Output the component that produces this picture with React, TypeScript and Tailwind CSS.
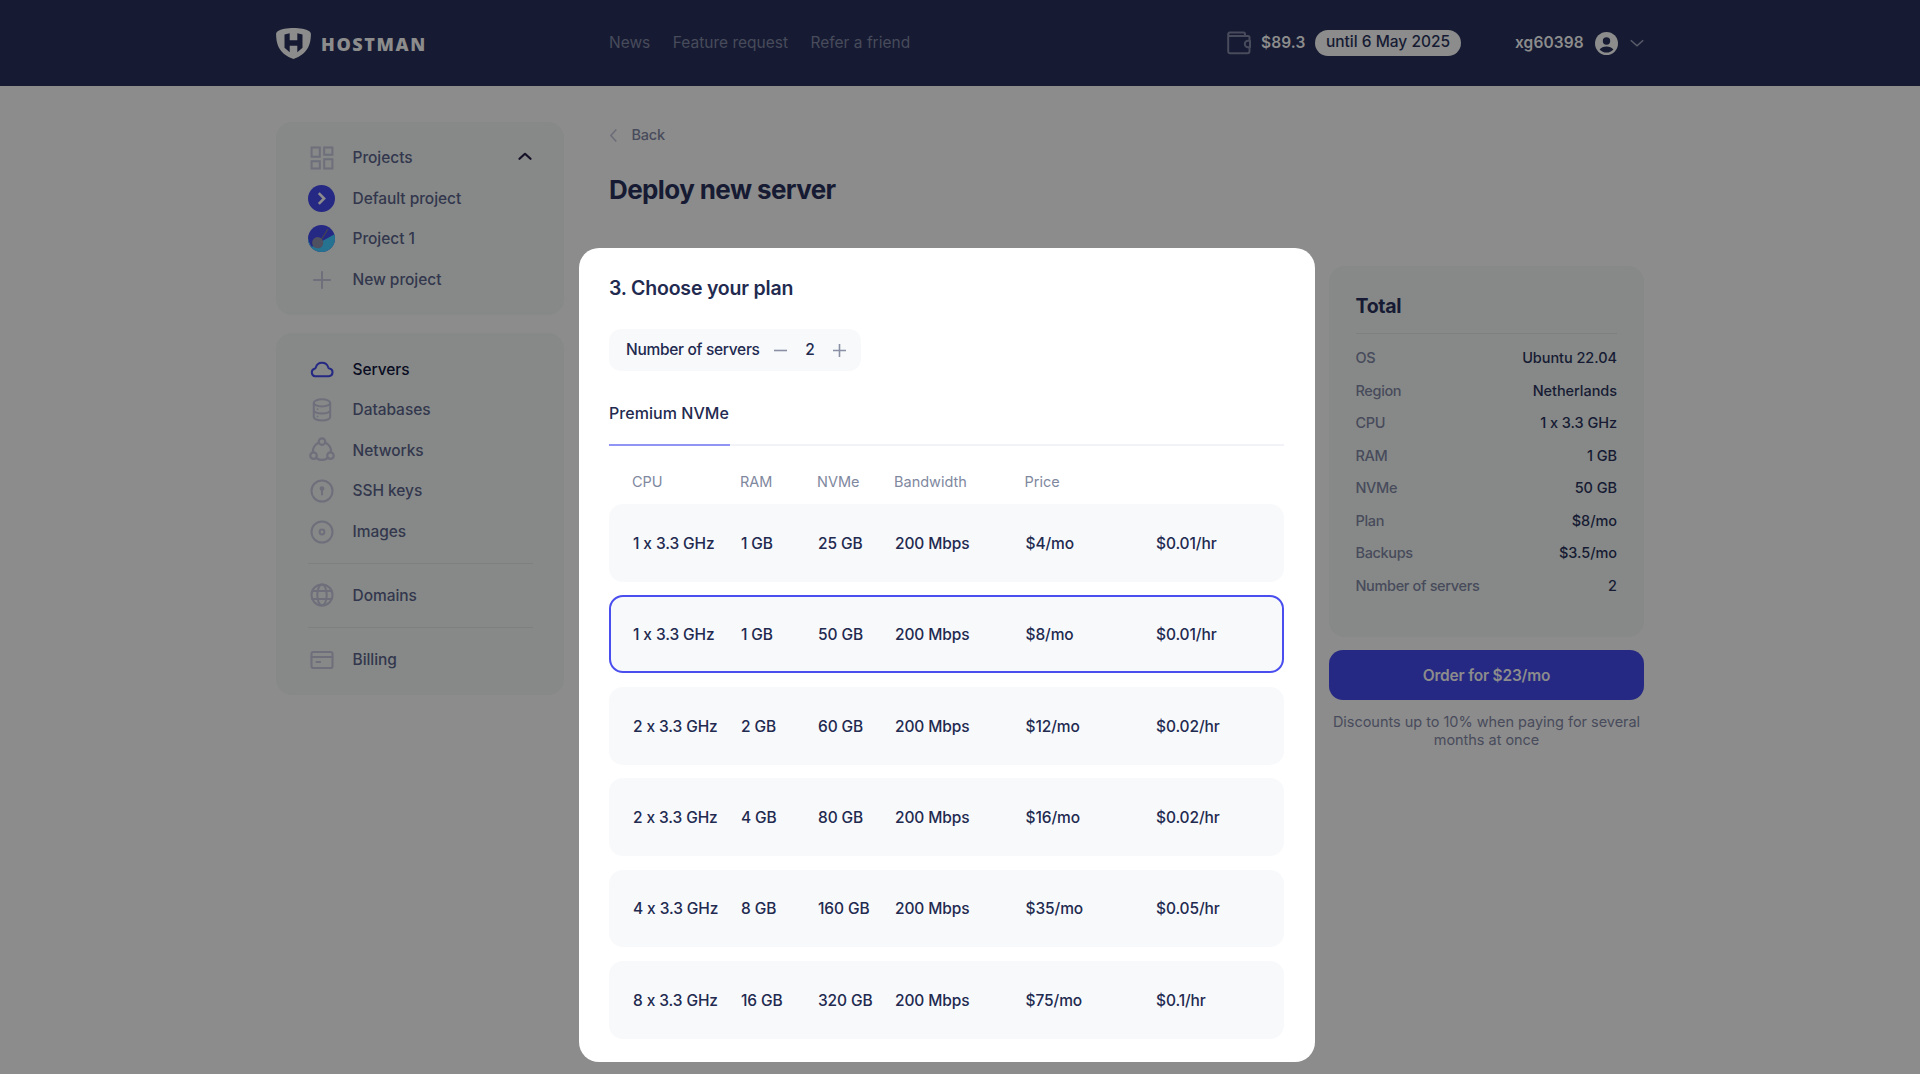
import type { ReactNode } from 'react';

function Icon({ size = 24, className = '', children }: { size?: number; className?: string; children: ReactNode }) {
  return (
    <svg width={size} height={size} viewBox="0 0 24 24" fill="none" stroke="currentColor" strokeWidth="2" strokeLinecap="round" strokeLinejoin="round" className={`shrink-0 ${className}`}>
      {children}
    </svg>
  );
}

const icons = {
  projects: (
    <Icon>
      <path strokeLinejoin="miter" d="M1.6 1.5h8.2v9.2H1.6zM14.2 1.5h8.2v7.2h-8.2zM1.6 15.3h8.2v7.2H1.6zM14.2 13.3h8.2v9.2h-8.2z" />
    </Icon>
  ),
  defaultProject: (
    <svg width="27" height="27" viewBox="0 0 27 27" fill="none">
      <circle cx="13.5" cy="13.5" r="13.5" fill="#262984" />
      <path d="m10.8 8.2 5.3 5.3-5.3 5.3" stroke="#8c8c8c" strokeWidth="2.6" />
    </svg>
  ),
  project1: (
    <svg width="27" height="27" viewBox="0 0 27 27" fill="none">
      <defs>
        <clipPath id="avatar">
          <circle cx="13.5" cy="13.5" r="13.5" />
        </clipPath>
      </defs>
      <g clipPath="url(#avatar)">
        <path d="M0 0h27v27H0z" fill="#262984" />
        <path d="M28 8.5 0 24v4h28z" fill="#267391" />
        <path d="M0 13c1 5 3 9 7 12l-5 2-2-5z" fill="#267391" />
        <path d="M13 15 20 4" stroke="#45464f" strokeWidth="1.2" />
        <circle cx="9.7" cy="17.7" r="5.6" fill="#4f5060" />
      </g>
    </svg>
  ),
  plus: (
    <Icon>
      <path strokeLinecap="butt" d="M12 3.2v17.6M3.2 12h17.6" />
    </Icon>
  ),
  cloud: (
    <Icon className="text-[#262984]">
      <path d="M5.2 19.2h13.6a3.9 3.9 0 0 0 .7-7.7 2 2 0 0 1-1.3-1.2 6.5 6.5 0 0 0-12.4.2 2 2 0 0 1-1.3 1.3A3.8 3.8 0 0 0 5.2 19.2z" />
    </Icon>
  ),
  database: (
    <Icon>
      <ellipse cx="12" cy="4.9" rx="8.2" ry="3.6" />
      <path d="M3.8 5v14c0 2 3.7 3.5 8.200 3.500s8.200-1.500 8.200-3.500V5M3.800 12.200c0 1.900 3.700 3.400 8.200 3.400s8.200-1.500 8.200-3.400" />
      <path strokeWidth="1.700" d="M7.500 11.200v.01M7.500 18.300v.01" />
    </Icon>
  ),
  network: (
    <Icon size={26}>
      <circle cx="12" cy="4.2" r="3" />
      <circle cx="4.2" cy="17.2" r="3" />
      <circle cx="19.8" cy="17.2" r="3" />
      <path d="M9.2 5.2a8.7 8.7 0 0 0-5.6 8.7M14.8 5.2a8.7 8.7 0 0 1 5.6 8.7M7 19.6a9.3 9.3 0 0 0 10 0" />
    </Icon>
  ),
  key: (
    <Icon>
      <circle cx="12" cy="12" r="10.5" />
      <circle cx="12" cy="9.6" r="1.4" fill="currentColor" />
      <path d="M12 10v5.5" />
    </Icon>
  ),
  disc: (
    <Icon>
      <circle cx="12" cy="12" r="10.5" />
      <circle cx="12" cy="12" r="2.4" />
    </Icon>
  ),
  globe: (
    <Icon>
      <circle cx="12" cy="12" r="10.5" />
      <ellipse cx="12" cy="12" rx="4.7" ry="10.5" />
      <path d="M2.3 8h19.4M2.3 16h19.4" />
    </Icon>
  ),
  card: (
    <Icon>
      <rect x="1.5" y="4" width="21" height="16" rx="1.8" />
      <path d="M1.5 9h21M6.5 14h3.6" />
    </Icon>
  ),
};

function NavItem({ icon, label, active, chevron }: { icon: ReactNode; label: string; active?: boolean; chevron?: boolean }) {
  return (
    <li className="flex h-[40.6px] items-center">
      <span className="flex w-[27px] justify-center text-[#6e6f7b]">{icon}</span>
      <span className={`ml-[17.5px] flex-1 text-[15.5px] font-medium tracking-[-0.05px] ${active ? 'text-[#0a0c22]' : 'text-[#33374d]'}`}>{label}</span>
      {chevron && (
        <svg width="14" height="9" viewBox="0 0 14 9" fill="none" stroke="#150f28" strokeWidth="2.2" strokeLinecap="round" strokeLinejoin="round" className="mb-[2px]">
          <path d="m1.5 6.8 5.5-5 5.5 5" />
        </svg>
      )}
    </li>
  );
}

function Header() {
  return (
    <header className="flex h-[86px] items-center bg-[#161b33] px-[276px] text-[#8c8c8c]">
      <div className="flex w-[333px] items-center">
        <svg width="35" height="31" viewBox="0 0 35 31" fill="none">
          <path d="M17.5 0C11 0 5 1 1.7 3.2.5 4 0 5 .1 6.5.3 17 3.5 26 17.5 31 31.5 26 34.7 17 34.9 6.5 35 5 34.5 4 33.3 3.2 30 1 24 0 17.5 0z" fill="#8c8c8c" />
          <path d="M8.5 6.5 13.700 5.300v7h7.600v-7l5.200 1.200v13.300l-5.200 4.400v-6.400h-7.600v6.400l-5.200-4.400z" fill="#161b33" />
        </svg>
        <span className="ml-[10px] mt-[2px] font-['Open_Sans'] text-[18px] font-extrabold leading-5 tracking-[1.6px]">HOSTMAN</span>
      </div>
      <nav className="flex flex-1 gap-[22.500px] text-[15.5px] text-[#484b5b]">
        <a>News</a>
        <a>Feature request</a>
        <a>Refer a friend</a>
      </nav>
      <div className="flex items-center">
        <Icon className="text-[#484b5b]">
          <path d="M22.5 9.5V6.5a1.5 1.5 0 0 0-1.5-1.5H2.5a1.4 1.4 0 0 1-1.3-1.4v0A2 2 0 0 1 3 1.5h13.500a1.500 1.500 0 0 1 1.500 1.500v2M1.200 3.500v16.800a2 2 0 0 0 2 2H20.500a2 2 0 0 0 2-2v-4M23 9.800h-2a3.200 3.200 0 0 0 0 6.400h2z" />
        </Icon>
        <span className="ml-[10px] w-[45px] text-[15.5px] font-semibold tracking-[0.1px]">$89.3</span>
        <span className="ml-[9px] flex h-[26px] w-[146px] items-center justify-center rounded-full bg-[#8c8c8c] pb-0.5 text-[15.5px] font-medium text-[#161b33]">until 6 May 2025</span>
        <span className="ml-[54px] w-[69px] text-[15.5px] font-semibold tracking-[0.1px]">xg60398</span>
        <svg width="23" height="23" viewBox="0 0 23 23" className="ml-[11px]">
          <circle cx="11.5" cy="11.5" r="11.5" fill="#8c8c8c" />
          <circle cx="11.5" cy="9" r="3.7" fill="#161b33" />
          <path d="M4.6 17.5c1.5-2 4-3 6.9-3s5.4 1 6.9 3a9.2 9.2 0 0 1-13.8 0z" fill="#161b33" />
        </svg>
        <svg width="14" height="9" viewBox="0 0 14 9" fill="none" stroke="#5a5c6a" strokeWidth="1.5" className="ml-[12px]">
          <path d="m.8 1.2 6.2 5.6 6.2-5.6" />
        </svg>
      </div>
    </header>
  );
}

function Sidebar() {
  return (
    <aside className="mt-[36px] flex w-[288px] flex-col gap-[18px]">
      <ul className="h-[193px] rounded-[16px] bg-[#868988] px-[32px] pt-[15.5px]">
        <NavItem icon={icons.projects} label="Projects" chevron />
        <NavItem icon={icons.defaultProject} label="Default project" />
        <NavItem icon={icons.project1} label="Project 1" />
        <NavItem icon={icons.plus} label="New project" />
      </ul>
      <ul className="h-[362px] rounded-[16px] bg-[#868988] px-[32px] pt-[16px]">
        <NavItem icon={icons.cloud} label="Servers" active />
        <NavItem icon={icons.database} label="Databases" />
        <NavItem icon={icons.network} label="Networks" />
        <NavItem icon={icons.key} label="SSH keys" />
        <NavItem icon={icons.disc} label="Images" />
        <li className="mb-[11px] mt-[11px] h-px w-[225px] bg-[#7e8080]" />
        <NavItem icon={icons.globe} label="Domains" />
        <li className="mb-[12px] mt-[11px] h-px w-[225px] bg-[#7e8080]" />
        <NavItem icon={icons.card} label="Billing" />
      </ul>
    </aside>
  );
}

const plans = [
  ['1 x 3.3 GHz', '1 GB', '25 GB', '200 Mbps', '$4/mo', '$0.01/hr'],
  ['1 x 3.3 GHz', '1 GB', '50 GB', '200 Mbps', '$8/mo', '$0.01/hr'],
  ['2 x 3.3 GHz', '2 GB', '60 GB', '200 Mbps', '$12/mo', '$0.02/hr'],
  ['2 x 3.3 GHz', '4 GB', '80 GB', '200 Mbps', '$16/mo', '$0.02/hr'],
  ['4 x 3.3 GHz', '8 GB', '160 GB', '200 Mbps', '$35/mo', '$0.05/hr'],
  ['8 x 3.3 GHz', '16 GB', '320 GB', '200 Mbps', '$75/mo', '$0.1/hr'],
];

const columns = 'grid grid-cols-[108px_77px_77px_130.5px_130.5px_1fr] items-center whitespace-nowrap';

function PlanPicker() {
  return (
    <section className="ml-[-31px] mt-[41px] h-[814px] w-[736px] rounded-[20px] bg-white pl-[30px] pr-[31px] text-[#222a50]">
      <h2 className="pt-[26px] text-[19.5px] font-semibold leading-7 tracking-[-0.2px]">3. Choose your plan</h2>
      <div className="mt-[27px] flex h-[42px] w-[252px] items-center rounded-[12px] bg-[#f8f9fb] pl-[17px]">
        <span className="w-[148px] text-[15.5px] font-medium tracking-[-0.3px]">Number of servers</span>
        <svg width="13" height="13" viewBox="0 0 13 13" stroke="#8990a5" strokeWidth="1.6">
          <path d="M0 6.5h13" />
        </svg>
        <span className="w-[46px] text-center text-[15.5px] font-medium">2</span>
        <svg width="13" height="13" viewBox="0 0 13 13" stroke="#8990a5" strokeWidth="1.6">
          <path d="M0 6.5h13M6.5 0v13" />
        </svg>
      </div>
      <div className="mt-[25px] flex h-[50px] border-b-2 border-[#f2f3f8]">
        <span className="h-[50px] w-[121px] whitespace-nowrap border-b-2 border-[#9094f5] pt-[5px] text-[16px] font-medium tracking-[0.05px]">Premium NVMe</span>
      </div>
      <div className={`${columns} mt-[24px] h-6 pl-[23px] text-[14.5px] text-[#8088a0]`}>
        <span>CPU</span>
        <span>RAM</span>
        <span>NVMe</span>
        <span>Bandwidth</span>
        <span>Price</span>
      </div>
      <div className="mt-[10px] flex flex-col gap-[13.6px]">
        {plans.map((plan, i) => (
          <div
            key={plan[2]}
            className={`${columns} h-[77.8px] rounded-[14px] border-2 bg-[#f8f9fb] pl-[22px] pt-px text-[15.5px] font-medium tracking-[-0.1px] ${i === 1 ? 'border-[#4a4eee]' : 'border-[#f8f9fb]'}`}
          >
            {plan.map((cell, j) => (
              <span key={j}>{cell}</span>
            ))}
          </div>
        ))}
      </div>
    </section>
  );
}

const totals = [
  ['OS', 'Ubuntu 22.04'],
  ['Region', 'Netherlands'],
  ['CPU', '1 x 3.3 GHz'],
  ['RAM', '1 GB'],
  ['NVMe', '50 GB'],
  ['Plan', '$8/mo'],
  ['Backups', '$3.5/mo'],
  ['Number of servers', '2'],
];

function Summary() {
  return (
    <aside className="ml-[14px] mt-[180px] w-[315px]">
      <div className="h-[371px] rounded-[16px] bg-[#868988] pl-[26.5px] pr-[27px] pt-[26px]">
        <h3 className="h-[42px] border-b border-[#7e8080] text-[19.5px] font-bold leading-7 tracking-[-0.3px] text-[#161b33]">Total</h3>
        <dl className="mt-[7.5px]">
          {totals.map(([name, value]) => (
            <div key={name} className="flex h-[32.6px] items-center justify-between text-[14.5px] font-medium">
              <dt className="tracking-[-0.35px] text-[#484b5b]">{name}</dt>
              <dd className="tracking-[-0.05px] text-[#161b33]">{value}</dd>
            </div>
          ))}
        </dl>
      </div>
      <button className="mt-[13px] h-[50px] w-full rounded-[14px] bg-[#262984] pt-0.5 text-[15.5px] font-semibold tracking-[-0.2px] text-[#8c8c8c]">Order for $23/mo</button>
      <p className="mt-[13px] whitespace-nowrap text-center text-[14.5px] leading-[18px] tracking-[-0.03px] text-[#484b5b]">
        Discounts up to 10% when paying for several
        <br />
        months at once
      </p>
    </aside>
  );
}

export default function App() {
  return (
    <div className="h-[1074px] w-[1920px] overflow-hidden bg-[#8c8c8c] font-['Inter',sans-serif]">
      <Header />
      <div className="flex px-[276px]">
        <Sidebar />
        <main className="ml-[46px] w-[705px]">
          <a className="mt-[39px] flex h-5 items-center text-[14.5px] font-medium tracking-[-0.2px] text-[#484b5b]">
            <svg width="7" height="13" viewBox="0 0 7 13" fill="none" stroke="#6c6d78" strokeWidth="1.5" className="mr-[14.5px]">
              <path d="M6.3.6.9 6.5l5.4 5.9" />
            </svg>
            Back
          </a>
          <h1 className="ml-[-1px] mt-[28px] h-[34px] text-[26px] font-bold leading-[34px] tracking-[-0.6px] text-[#161b33]">Deploy new server</h1>
          <PlanPicker />
        </main>
        <Summary />
      </div>
    </div>
  );
}
